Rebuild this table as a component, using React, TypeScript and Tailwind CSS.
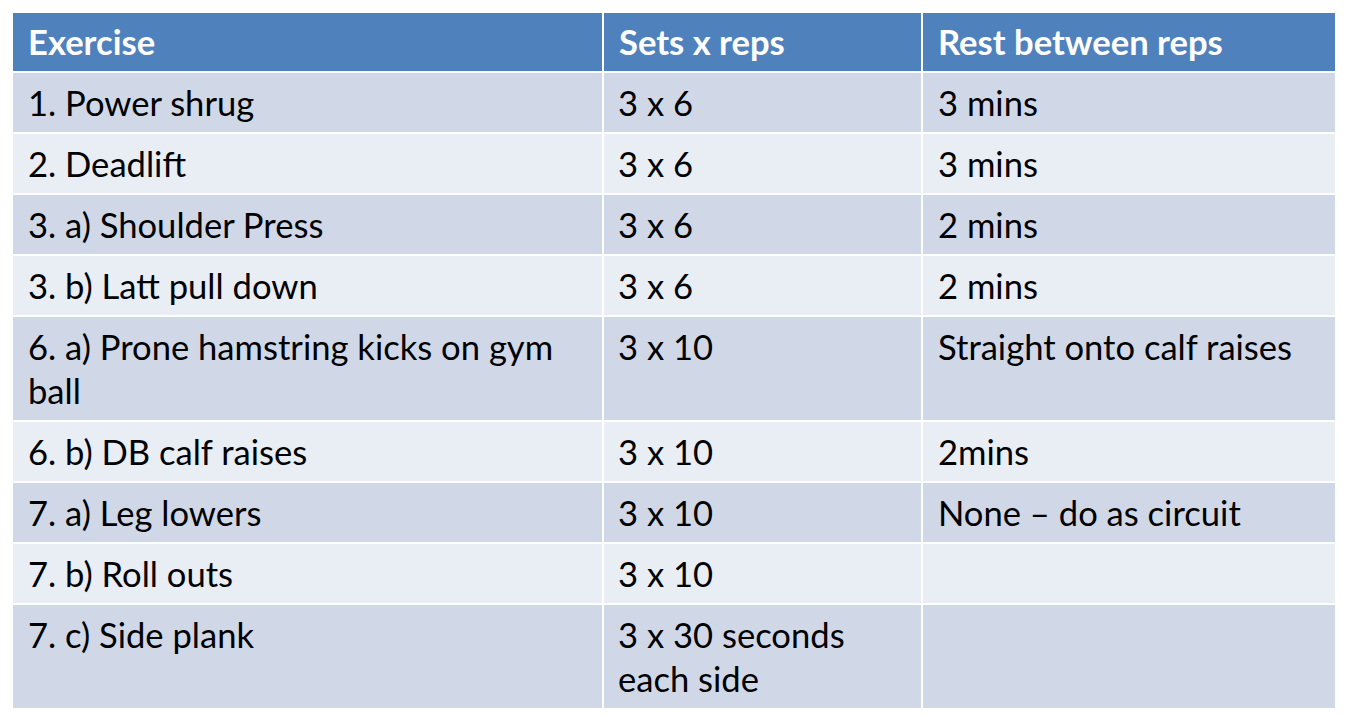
import React from 'react';

type Row = {
  exercise: React.ReactNode;
  sets: React.ReactNode;
  rest: string;
};

const rows: Row[] = [
  { exercise: '1. Power shrug', sets: '3 x 6', rest: '3 mins' },
  { exercise: '2. Deadlift', sets: '3 x 6', rest: '3 mins' },
  { exercise: '3. a) Shoulder Press', sets: '3 x 6', rest: '2 mins' },
  { exercise: '3. b) Latt pull down', sets: '3 x 6', rest: '2 mins' },
  {
    exercise: (
      <>
        6. a) Prone hamstring kicks on gym
        <br />
        ball
      </>
    ),
    sets: '3 x 10',
    rest: 'Straight onto calf raises',
  },
  { exercise: '6. b) DB calf raises', sets: '3 x 10', rest: '2mins' },
  { exercise: '7. a) Leg lowers', sets: '3 x 10', rest: 'None \u2013 do as circuit' },
  { exercise: '7. b) Roll outs', sets: '3 x 10', rest: '' },
  {
    exercise: '7. c) Side plank',
    sets: (
      <>
        3 x 30 seconds
        <br />
        each side
      </>
    ),
    rest: '',
  },
];

export default function App() {
  return (
    <div className="min-h-screen bg-white pt-[13px] pl-[13px] font-['Lato','Noto_Sans',sans-serif]">
      <div className="grid w-[1322px] grid-cols-[589px_317px_412px] gap-[2px] bg-white text-[34.6px] leading-[44px]">
        {['Exercise', 'Sets x reps', 'Rest between reps'].map((h) => (
          <div key={h} className="bg-[#4f81bd] pl-[15px] pt-[7px] pb-[7px] font-bold text-white">
            {h}
          </div>
        ))}
        {rows.map((r, i) => {
          const bg = i % 2 === 0 ? 'bg-[#d0d8e8]' : 'bg-[#e9edf4]';
          return (
            <React.Fragment key={i}>
              <div className={`${bg} pl-[15px] pt-[8px] pb-[7px] text-black`}>{r.exercise}</div>
              <div className={`${bg} pl-[14px] pt-[8px] pb-[7px] text-black`}>{r.sets}</div>
              <div className={`${bg} pl-[15px] pt-[8px] pb-[7px] text-black`}>{r.rest}</div>
            </React.Fragment>
          );
        })}
      </div>
    </div>
  );
}
